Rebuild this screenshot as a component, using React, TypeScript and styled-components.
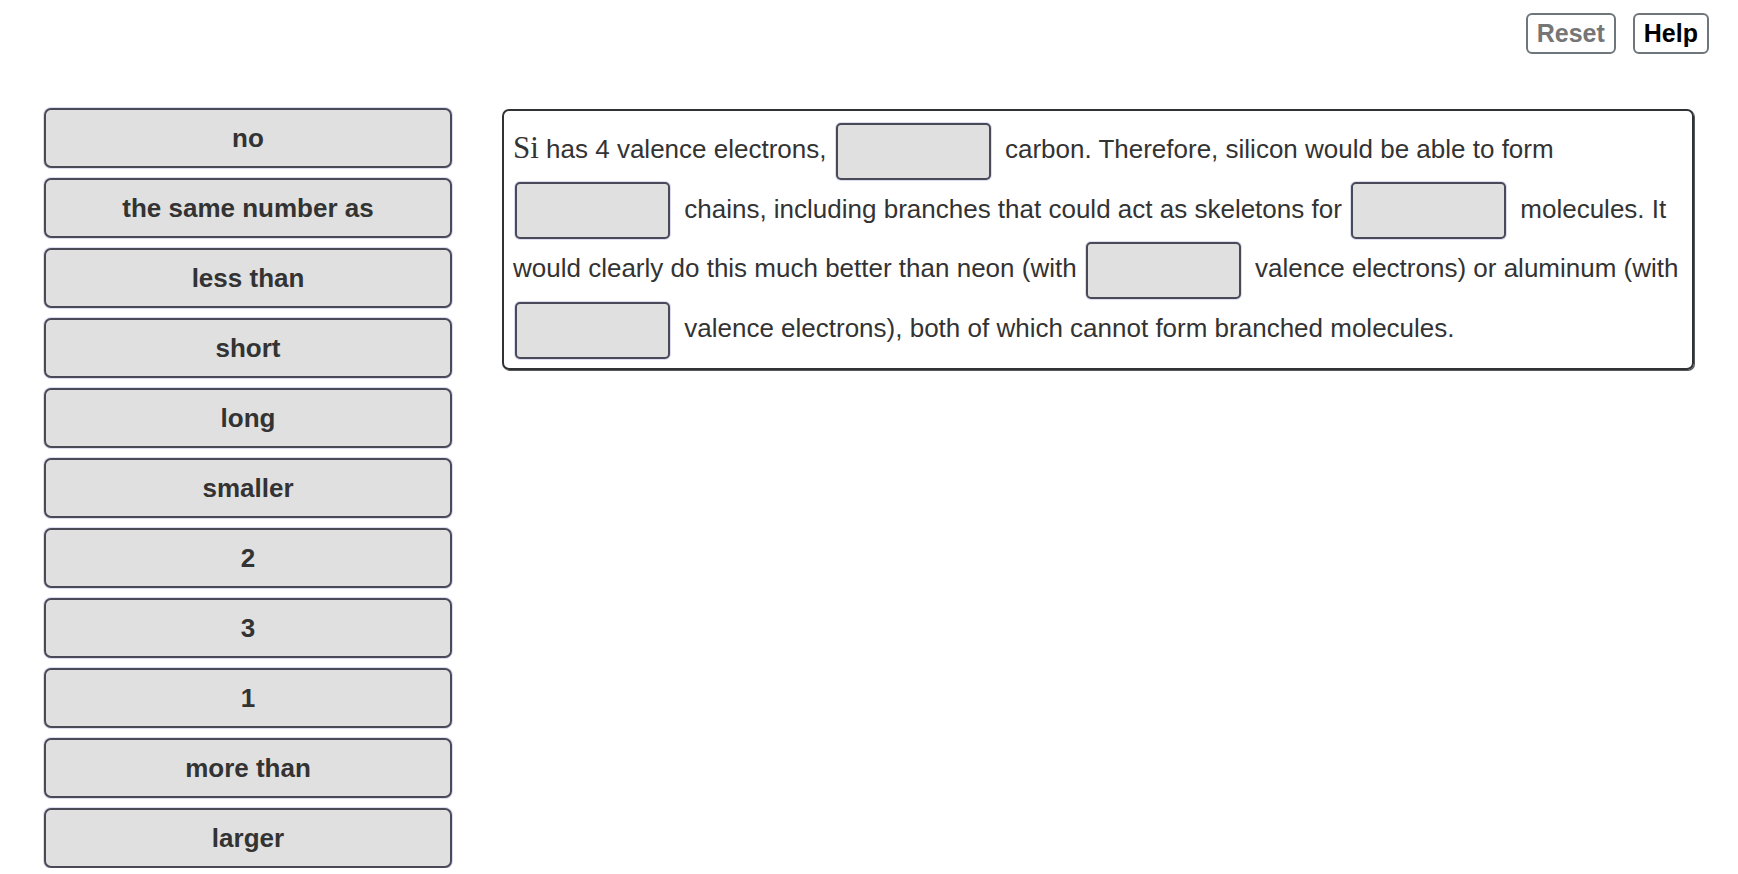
import React from "react";
import styled, { createGlobalStyle } from "styled-components";

const GlobalStyle = createGlobalStyle`
  html, body {
    margin: 0;
    padding: 0;
    background: #ffffff;
  }
  body {
    font-family: "Liberation Sans", Arial, Helvetica, sans-serif;
    color: #333333;
  }
`;

const Page = styled.div`
  padding: 13px 29px 0 44px;
`;

const TopBar = styled.div`
  display: flex;
  justify-content: flex-end;
  gap: 17px;
  margin-bottom: 54px;
`;

const ToolButton = styled.button<{ $muted?: boolean }>`
  box-sizing: border-box;
  height: 41px;
  padding: 0 9px;
  border: 2px solid #6f767b;
  border-radius: 6px;
  background: #ffffff;
  font-family: "Liberation Sans", Arial, sans-serif;
  font-weight: 700;
  font-size: 25px;
  line-height: 1;
  color: ${(p) => (p.$muted ? "#767676" : "#000000")};
  cursor: pointer;
`;

const Main = styled.div`
  display: flex;
  align-items: flex-start;
  gap: 50px;
  padding-right: 15px;
`;

const ChoiceColumn = styled.div`
  flex: 0 0 408px;
  display: flex;
  flex-direction: column;
  gap: 10px;
`;

const Choice = styled.div`
  box-sizing: border-box;
  height: 60px;
  display: flex;
  align-items: center;
  justify-content: center;
  background: #e0e0e0;
  border: 2px solid #4a4a57;
  border-radius: 7px;
  box-shadow: 0 0 0 1px #dcdcf2;
  font-weight: 700;
  font-size: 26px;
  color: #333333;
`;

const Passage = styled.div`
  flex: 1;
  box-sizing: border-box;
  margin-top: 1px;
  border: 2px solid #2f3336;
  border-radius: 7px;
  box-shadow: 1px 1px 0 #55595c;
  padding: 7px 10px 9px 9px;
  font-size: 26px;
  line-height: 59px;
  color: #333333;
`;

const Element = styled.span`
  font-family: "Liberation Serif", "Times New Roman", serif;
  font-size: 31px;
`;

const Blank = styled.span`
  box-sizing: border-box;
  display: inline-block;
  width: 155px;
  height: 57px;
  vertical-align: middle;
  margin: 0 7px 0 2px;
  background: #e0e0e0;
  border: 2px solid #4a4a57;
  border-radius: 5px;
  box-shadow: 0 0 0 1px #dcdcf2;
`;

const choices = [
  "no",
  "the same number as",
  "less than",
  "short",
  "long",
  "smaller",
  "2",
  "3",
  "1",
  "more than",
  "larger",
];

export default function App() {
  return (
    <>
      <GlobalStyle />
      <Page>
        <TopBar>
          <ToolButton $muted>Reset</ToolButton>
          <ToolButton>Help</ToolButton>
        </TopBar>
        <Main>
          <ChoiceColumn>
            {choices.map((c) => (
              <Choice key={c}>{c}</Choice>
            ))}
          </ChoiceColumn>
          <Passage>
            <Element>Si</Element> has 4 valence electrons, <Blank /> carbon.
            Therefore, silicon would be able to form <Blank /> chains, including
            branches that could act as skeletons for <Blank /> molecules. It
            would clearly do this much better than neon (with <Blank /> valence
            electrons) or aluminum (with <Blank /> valence electrons), both of
            which cannot form branched molecules.
          </Passage>
        </Main>
      </Page>
    </>
  );
}
